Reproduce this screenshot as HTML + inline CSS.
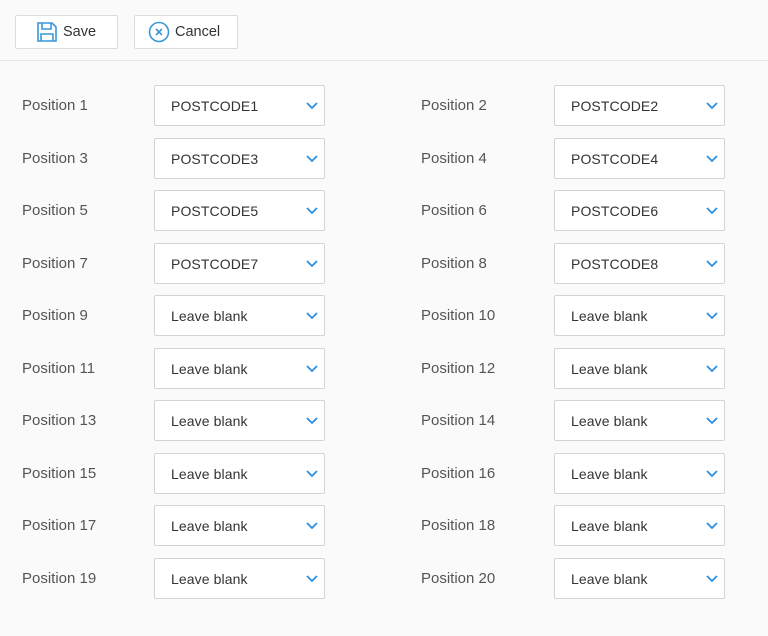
<!DOCTYPE html>
<html><head><style>
body{margin:0;width:768px;height:636px;background:#fafafa;font-family:"Liberation Sans",sans-serif;position:relative;overflow:hidden}
.btn{position:absolute;top:15px;height:32px;border:1px solid #dcdcdc;background:#fff;border-radius:2px;font-size:14.5px;color:#333;display:flex;align-items:center}
.hr{position:absolute;top:60px;left:0;width:768px;height:1px;background:#e3e8ec}
.lbl{position:absolute;font-size:15px;color:#555;line-height:20px}
.sel{position:absolute;width:169px;height:39px;border:1px solid #d4d4d4;background:#fff;border-radius:2px;box-sizing:content-box}
.sel span{position:absolute;left:16px;top:10px;font-size:14px;color:#333;line-height:20px;letter-spacing:0.1px}
.sel svg{position:absolute;right:5px;top:15px}
</style></head><body>
<div class="btn" style="left:15px;width:101px">
<svg width="22" height="22" viewBox="0 0 22 22" style="margin-left:20px;margin-right:5px"><path d="M2 2h14l4 4v14H2z" fill="none" stroke="#3a97d6" stroke-width="1.6"/><path d="M6 2v6h9V2M5 20v-7h12v7" fill="none" stroke="#3a97d6" stroke-width="1.6"/></svg>Save</div>
<div class="btn" style="left:134px;width:102px">
<svg width="22" height="22" viewBox="0 0 22 22" style="margin-left:13px;margin-right:5px"><circle cx="11" cy="11" r="9.5" fill="none" stroke="#3a97d6" stroke-width="1.6"/><path d="M8 8l6 6M14 8l-6 6" stroke="#3a97d6" stroke-width="1.6"/></svg>Cancel</div>
<div class="hr"></div>
<div id="rows"></div>
<script>
var h='';var vals=['POSTCODE1','POSTCODE2','POSTCODE3','POSTCODE4','POSTCODE5','POSTCODE6','POSTCODE7','POSTCODE8'];
for(var i=0;i<20;i++){var r=Math.floor(i/2),c=i%2;var cy=105+r*52.5;var lx=c?421:22,sx=c?554:154;
var v=vals[i]||'Leave blank';
h+='<div class="lbl" style="left:'+lx+'px;top:'+(cy-9)+'px">Position '+(i+1)+'</div>';
h+='<div class="sel" style="left:'+sx+'px;top:'+(cy-20)+'px"><span>'+v+'</span><svg width="14" height="10" viewBox="0 0 14 10"><path d="M2 2l5 5 5-5" fill="none" stroke="#2d8fe0" stroke-width="1.8"/></svg></div>';}
document.getElementById('rows').innerHTML=h;
</script>
</body></html>
